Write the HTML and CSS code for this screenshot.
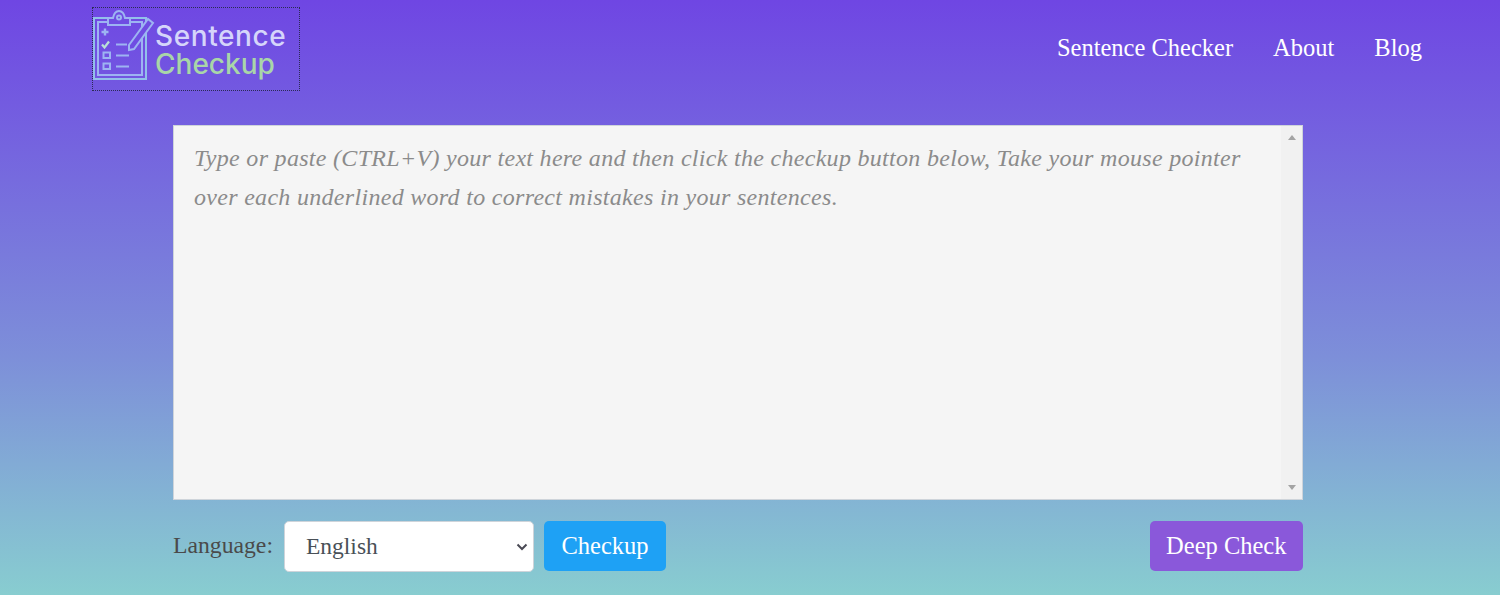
FILE: index.html
```html
<!DOCTYPE html>
<html lang="en">
<head>
    <meta charset="UTF-8">
    <meta name="viewport" content="width=device-width, initial-scale=1.0">
    <title>Sentence Checkup</title>
    <link rel="stylesheet" href="styles.css">
</head>
<body>
    <header class="site-header">
        <a class="logo" href="#">
            <svg class="logo-icon" width="62" height="72" viewBox="0 0 62 72" fill="none" stroke="#9db4f2" stroke-width="2">
                <rect x="1" y="9" width="52" height="61" stroke="#93c0ea"/>
                <rect x="5" y="13" width="44" height="53"/>
                <path d="M15 9V16H37V9H32C31 4 29 2 26 2S21 4 20 9Z" fill="#6f4de2"/>
                <circle cx="26" cy="8.500" r="2"/>
                <path d="M8.500 23H15.500M12 19.500V26.500" stroke-width="2.400"/>
                <path d="M9 35.500L11.500 38.500L16 32.500" stroke="#b9e0d6" stroke-width="2.200"/>
                <path d="M23 35.500H34M23 46.500H36M23 57.500H36" stroke-width="2.200"/>
                <rect x="10.500" y="43.500" width="6.500" height="5.500"/>
                <rect x="10.500" y="54.500" width="6.500" height="5.500"/>
                <path d="M36 36L55 10L60 14L41 40L36 41Z" fill="#6f4de2"/>
            </svg>
            <span class="logo-text">
                <span class="logo-top">Sentence</span>
                <span class="logo-bottom">Checkup</span>
            </span>
        </a>
        <nav class="main-nav">
            <a href="#">Sentence Checker</a>
            <a href="#">About</a>
            <a href="#">Blog</a>
        </nav>
    </header>

    <main class="container">
        <div class="editor">
            <textarea class="editor-input" placeholder="Type or paste (CTRL+V) your text here and then click the checkup button below, Take your mouse pointer over each underlined word to correct mistakes in your sentences."></textarea>
            <div class="scrollbar">
                <span class="arrow-up"></span>
                <span class="arrow-down"></span>
            </div>
        </div>

        <div class="controls">
            <label class="lang-label" for="language">Language:</label>
            <div class="select-wrap">
                <select class="lang-select" id="language">
                    <option>English</option>
                    <option>French</option>
                    <option>German</option>
                </select>
                <svg class="select-arrow" width="12" height="8" viewBox="0 0 12 8" fill="none" stroke="#4a4a55" stroke-width="2">
                    <path d="M1.500 1.500L6 6L10.500 1.500"/>
                </svg>
            </div>
            <button class="btn btn-check">Checkup</button>
            <button class="btn btn-deep">Deep Check</button>
        </div>
    </main>
</body>
</html>
```

FILE: styles.css
```css
* {
    box-sizing: border-box;
}
html, body {
    height: 100%;
}
body {
    margin: 0;
    overflow: hidden;
    font-family: "Liberation Serif", "DejaVu Serif", serif;
    background: linear-gradient(180deg, #6f46e3 0%, #7d8fd9 60%, #88cdd0 100%);
}
.site-header {
    height: 125px;
    padding: 7px 78px 0 92px;
    display: flex;
    justify-content: space-between;
    align-items: flex-start;
}
.logo {
    width: 208px;
    height: 84px;
    padding: 1px 0 0 0;
    border: 1px dotted #2b2b55;
    display: flex;
    align-items: flex-start;
    text-decoration: none;
}
.logo-icon {
    flex: none;
    filter: blur(0.4px);
}
.logo-text {
    margin: 13px 0 0 0;
    display: flex;
    flex-direction: column;
    font-family: "Inter", "Open Sans", sans-serif;
    font-size: 28px;
    font-weight: 500;
    line-height: 28px;
}
.logo-top {
    color: #d5d5fa;
    letter-spacing: 0.6px;
}
.logo-bottom {
    color: #a9d6a8;
}
.main-nav {
    margin-top: 26px;
    display: flex;
    gap: 40px;
}
.main-nav a {
    color: #fff;
    font-size: 24.500px;
    line-height: 30px;
    text-decoration: none;
}
.container {
    width: 1130px;
    margin: 0 auto 0 173px;
}
.editor {
    height: 375px;
    display: flex;
    background: #f5f5f5;
    border: 1px solid #ced4da;
}
.editor-input {
    flex: 1;
    padding: 13px 20px;
    border: none;
    outline: none;
    resize: none;
    overflow: hidden;
    background: transparent;
    font-family: inherit;
    font-size: 24px;
    line-height: 39px;
    letter-spacing: 0.3px;
}
.editor-input::placeholder {
    color: #8b8b8b;
    font-style: italic;
    opacity: 1;
}
.scrollbar {
    width: 21px;
    background: #f1f1f1;
    display: flex;
    flex-direction: column;
    justify-content: space-between;
    align-items: center;
    padding: 9px 0;
}
.arrow-up {
    border: 4.500px solid transparent;
    border-top: 0;
    border-bottom: 5px solid #a3a3a3;
}
.arrow-down {
    border: 4.500px solid transparent;
    border-bottom: 0;
    border-top: 5px solid #a3a3a3;
}
.controls {
    margin-top: 21px;
    display: flex;
    align-items: flex-start;
}
.lang-label {
    margin-right: 11px;
    color: #4a4a4a;
    font-size: 23.700px;
    line-height: 49px;
}
.select-wrap {
    position: relative;
    margin-right: 10px;
}
.lang-select {
    display: block;
    width: 250px;
    height: 51px;
    padding: 0 21px 2px;
    background: #fff;
    border: 1px solid #ced4da;
    border-radius: 5px;
    color: #495057;
    font-family: inherit;
    font-size: 23.500px;
    appearance: none;
}
.select-arrow {
    position: absolute;
    top: 22px;
    right: 6px;
    pointer-events: none;
}
.btn {
    height: 50px;
    border: none;
    border-radius: 5px;
    color: #fff;
    font-family: inherit;
    font-size: 24.500px;
    cursor: pointer;
}
.btn-check {
    padding: 0 17.500px 1px;
    background: #1ea1f5;
}
.btn-deep {
    margin-left: auto;
    padding: 0 16.500px 1px;
    background: #8a58da;
}
```
